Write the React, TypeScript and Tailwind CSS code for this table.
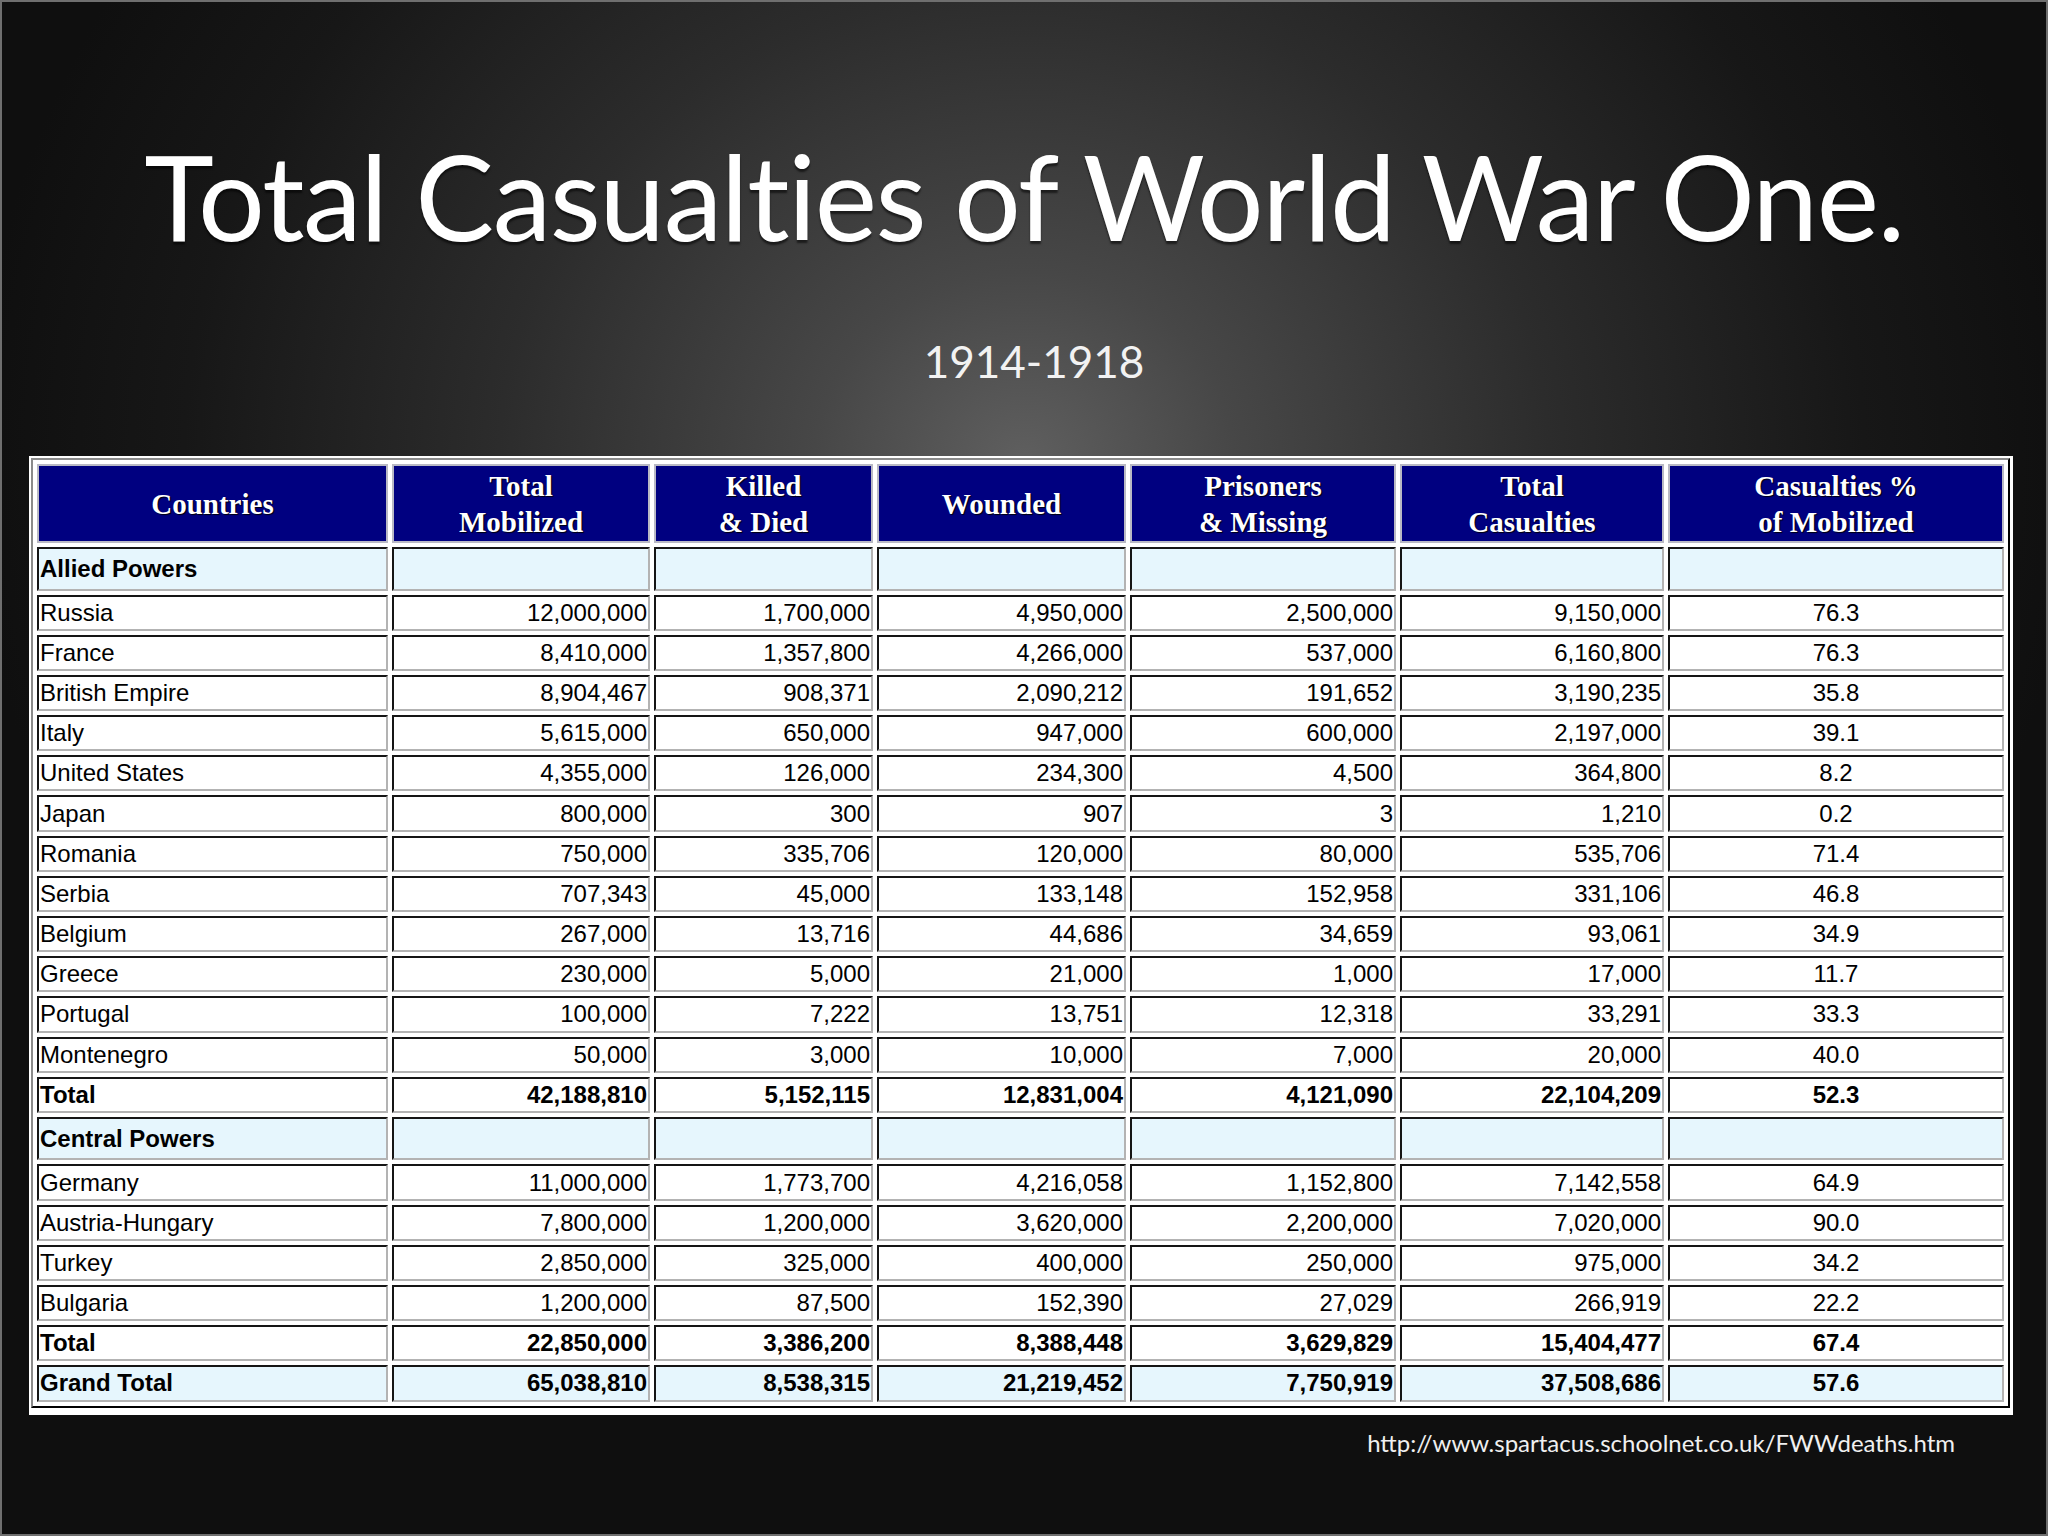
import * as React from 'react'

type Row = {
  name: string
  values?: string[]
  kind: 'section' | 'row' | 'total' | 'grand'
}

const rows: Row[] = [
  { name: 'Allied Powers', kind: 'section' },
  { name: 'Russia', kind: 'row', values: ['12,000,000', '1,700,000', '4,950,000', '2,500,000', '9,150,000', '76.3'] },
  { name: 'France', kind: 'row', values: ['8,410,000', '1,357,800', '4,266,000', '537,000', '6,160,800', '76.3'] },
  { name: 'British Empire', kind: 'row', values: ['8,904,467', '908,371', '2,090,212', '191,652', '3,190,235', '35.8'] },
  { name: 'Italy', kind: 'row', values: ['5,615,000', '650,000', '947,000', '600,000', '2,197,000', '39.1'] },
  { name: 'United States', kind: 'row', values: ['4,355,000', '126,000', '234,300', '4,500', '364,800', '8.2'] },
  { name: 'Japan', kind: 'row', values: ['800,000', '300', '907', '3', '1,210', '0.2'] },
  { name: 'Romania', kind: 'row', values: ['750,000', '335,706', '120,000', '80,000', '535,706', '71.4'] },
  { name: 'Serbia', kind: 'row', values: ['707,343', '45,000', '133,148', '152,958', '331,106', '46.8'] },
  { name: 'Belgium', kind: 'row', values: ['267,000', '13,716', '44,686', '34,659', '93,061', '34.9'] },
  { name: 'Greece', kind: 'row', values: ['230,000', '5,000', '21,000', '1,000', '17,000', '11.7'] },
  { name: 'Portugal', kind: 'row', values: ['100,000', '7,222', '13,751', '12,318', '33,291', '33.3'] },
  { name: 'Montenegro', kind: 'row', values: ['50,000', '3,000', '10,000', '7,000', '20,000', '40.0'] },
  { name: 'Total', kind: 'total', values: ['42,188,810', '5,152,115', '12,831,004', '4,121,090', '22,104,209', '52.3'] },
  { name: 'Central Powers', kind: 'section' },
  { name: 'Germany', kind: 'row', values: ['11,000,000', '1,773,700', '4,216,058', '1,152,800', '7,142,558', '64.9'] },
  { name: 'Austria-Hungary', kind: 'row', values: ['7,800,000', '1,200,000', '3,620,000', '2,200,000', '7,020,000', '90.0'] },
  { name: 'Turkey', kind: 'row', values: ['2,850,000', '325,000', '400,000', '250,000', '975,000', '34.2'] },
  { name: 'Bulgaria', kind: 'row', values: ['1,200,000', '87,500', '152,390', '27,029', '266,919', '22.2'] },
  { name: 'Total', kind: 'total', values: ['22,850,000', '3,386,200', '8,388,448', '3,629,829', '15,404,477', '67.4'] },
  { name: 'Grand Total', kind: 'grand', values: ['65,038,810', '8,538,315', '21,219,452', '7,750,919', '37,508,686', '57.6'] },
]

const headers: { label: React.ReactNode; w: string }[] = [
  { label: 'Countries', w: 'w-[351px]' },
  { label: <>Total<br />Mobilized</>, w: 'w-[258px]' },
  { label: <>Killed<br />&amp; Died</>, w: 'w-[219px]' },
  { label: 'Wounded', w: 'w-[249px]' },
  { label: <>Prisoners<br />&amp; Missing</>, w: 'w-[266px]' },
  { label: <>Total<br />Casualties</>, w: 'w-[264px]' },
  { label: <>Casualties %<br />of Mobilized</>, w: 'w-[336px]' },
]

// inset cell border like an old html table with border=1
const cellBorder = 'border-2 border-t-[#151515] border-l-[#151515] border-b-[#b3b3b3] border-r-[#b3b3b3]'

function DataRow({ row }: { row: Row }) {
  const tinted = row.kind === 'section' || row.kind === 'grand'
  const bold = row.kind !== 'row'
  const bg = tinted ? 'bg-[#e6f6fd]' : 'bg-white'
  const h = row.kind === 'section' ? 'h-[43.5px]' : 'h-[36.2px]'
  return (
    <tr className={h}>
      <td className={`${cellBorder} ${bg} pl-[1px] text-left ${bold ? 'font-bold' : ''}`}>{row.name}</td>
      {Array.from({ length: 6 }).map((_, i) => (
        <td
          key={i}
          className={`${cellBorder} ${bg} ${i === 5 ? 'text-center' : 'text-right pr-[1px]'} ${bold ? 'font-bold' : ''}`}
        >
          {row.values ? row.values[i] : ''}
        </td>
      ))}
    </tr>
  )
}

export default function App() {
  return (
    <div className="w-[2048px] h-[1536px] overflow-hidden border-2 border-[#6f6f6f] bg-[radial-gradient(ellipse_1050px_950px_at_50%_30%,#5f5f5f_0%,#474747_20%,#2c2c2c_50%,#171717_80%,#0f0f0f_100%)] flex flex-col font-['Lato','Open_Sans',sans-serif]">
      <h1 className="mt-[135px] text-center text-[118px] leading-none tracking-[-1.5px] text-white font-normal [text-shadow:0_3px_2px_rgba(0,0,0,0.55)]">
        Total Casualties of World War One.
      </h1>
      <div className="mt-[84px] pl-[20px] text-center text-[44px] leading-none text-[#f2f2f2]">1914-1918</div>

      <div className="mt-[73px] ml-[27px] w-[1984px] bg-white pt-[2px] pl-[2px] pr-[3px] pb-[7px]">
        <table className="table-fixed border-separate border-spacing-[4px] border-2 border-t-[#8a8a8a] border-l-[#8a8a8a] border-r-black border-b-black font-['Liberation_Sans',Arial,sans-serif] text-[24px] leading-none text-black">
          <thead>
            <tr className="h-[79px]">
              {headers.map((hd, i) => (
                <th
                  key={i}
                  className={`${hd.w} bg-[#000080] border-2 border-[#b9b9c4] text-center align-middle font-['Liberation_Serif','Times_New_Roman',serif] font-bold text-[29px] leading-[36px] text-white [text-shadow:1px_1px_1px_rgba(0,0,0,0.9)]`}
                >
                  {hd.label}
                </th>
              ))}
            </tr>
          </thead>
          <tbody>
            {rows.map((r, i) => (
              <DataRow key={i} row={r} />
            ))}
          </tbody>
        </table>
      </div>

      <div className="mt-[16px] pr-[91px] text-right text-[24px] leading-none text-[#f0f0f0]">
        http://www.spartacus.schoolnet.co.uk/FWWdeaths.htm
      </div>
    </div>
  )
}
